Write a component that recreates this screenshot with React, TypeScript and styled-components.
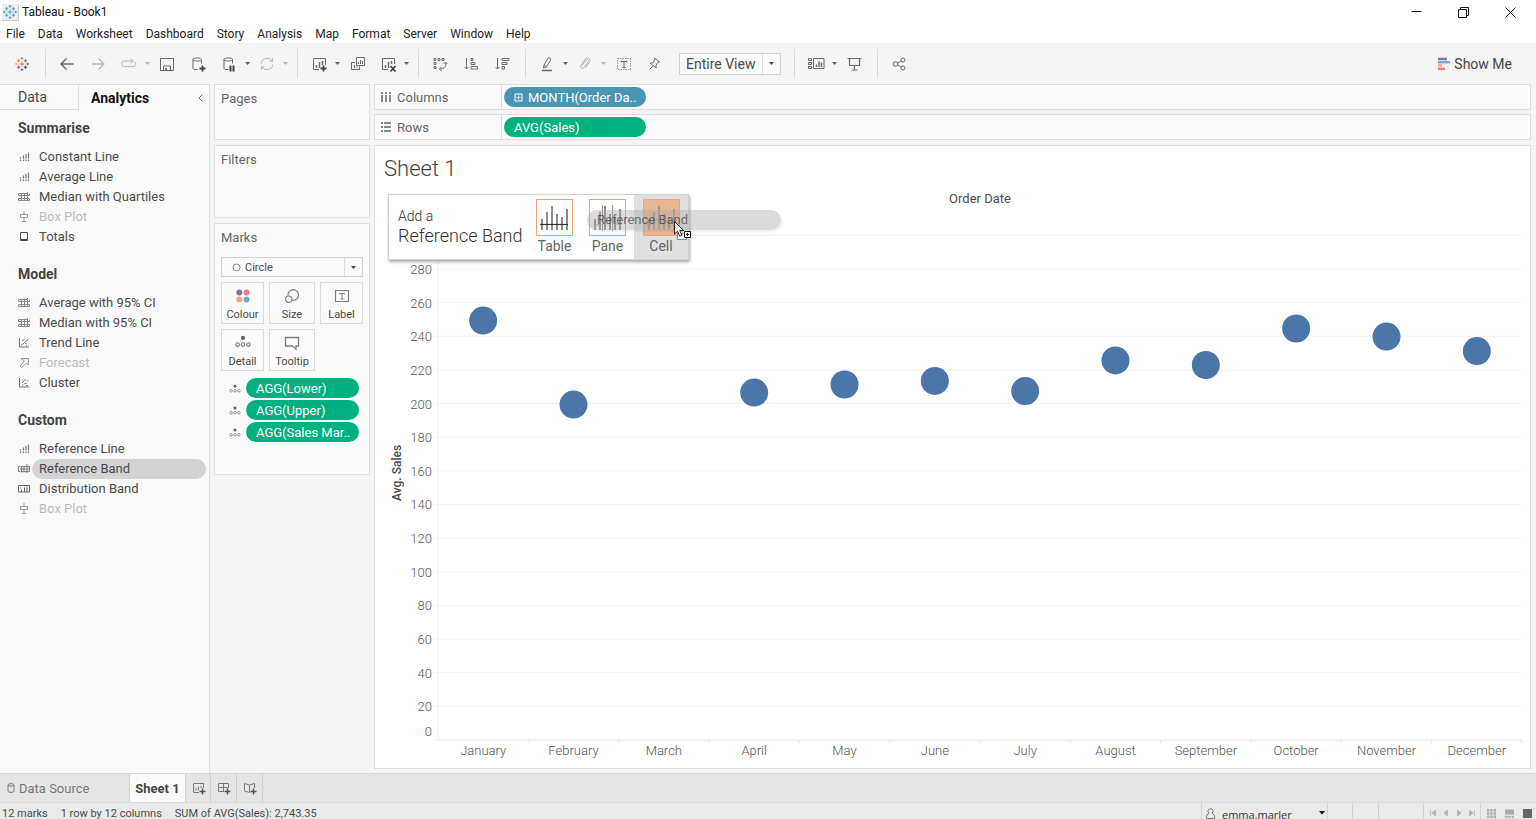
import React from "react";
import styled, { createGlobalStyle, css } from "styled-components";

const c = {
  panel: "#fafafa",
  ground: "#f4f4f4",
  line: "#dddddd",
  text: "#4a4a4a",
  soft: "#666666",
  faint: "#bbbbbb",
  green: "#00b180",
  blue: "#4996b2",
  mark: "#4a76a8",
};
const ui = `Roboto, "Liberation Sans", sans-serif`;
const system = `"Open Sans", "Noto Sans", sans-serif`;

const GlobalStyle = createGlobalStyle`
  * { box-sizing: border-box; }
  body { margin: 0; background: ${c.ground}; color: ${c.text}; font-family: ${ui}; font-size: 13px; }
  button, select { font: inherit; color: inherit; background: none; border: 0; padding: 0; margin: 0; }
  h1, h2, h3, ul, p { margin: 0; padding: 0; font-weight: inherit; font-size: inherit; }
  ul { list-style: none; }
  svg { display: block; flex: none; overflow: visible; }
`;

const Window = styled.div`
  display: flex;
  flex-direction: column;
  height: 100vh;
  min-height: 640px;
  overflow: hidden;
`;

/* ---------- title bar and menus ---------- */
const TitleBar = styled.header`
  display: flex;
  align-items: center;
  height: 24px;
  padding: 0 10px 0 2px;
  gap: 3px;
  background: #fff;
  color: #111;
  font: 12px/24px ${ui};
`;
const AppBadge = styled.span`
  display: flex;
  padding: 1px;
  background: #eee;
  border-right: 1px solid #ccc;
  border-bottom: 1px solid #ccc;
`;
const WindowControls = styled.div`
  display: flex;
  margin-left: auto;
  gap: 15px;
`;
const WindowButton = styled.button`
  display: flex;
  align-items: center;
  justify-content: center;
  width: 32px;
  height: 22px;
`;
const MenuBar = styled.nav`
  display: flex;
  height: 19px;
  padding: 0 6px;
  gap: 13px;
  background: #fff;
  color: #222;
  font: 12px/20px ${ui};
`;

/* ---------- toolbar ---------- */
const Toolbar = styled.div`
  display: flex;
  align-items: center;
  height: 41px;
  padding: 0 18px 0 6px;
  flex: none;
`;
const ToolButton = styled.button<{ $off?: boolean }>`
  display: flex;
  align-items: center;
  justify-content: center;
  width: 31px;
  height: 28px;
  color: ${(p) => (p.$off ? "#b8b8b8" : "#6c6c6c")};
`;
const CaretButton = styled.button<{ $off?: boolean }>`
  display: flex;
  align-items: center;
  justify-content: center;
  width: 7px;
  height: 28px;
  color: ${(p) => (p.$off ? "#b8b8b8" : "#606060")};
`;
const Separator = styled.span`
  width: 1px;
  height: 29px;
  margin: 0 5px 0 8px;
  background: #dadada;
`;
const SelectBox = styled.div<{ $w: number; $margin?: string }>`
  position: relative;
  display: flex;
  align-items: center;
  width: ${(p) => p.$w}px;
  margin: ${(p) => p.$margin || 0};
  border: 1px solid #d2d2d2;
  background: ${c.panel};
`;
const Select = styled.select<{ $size: number; $h: number; $pad: number }>`
  appearance: none;
  width: 100%;
  height: ${(p) => p.$h}px;
  padding-left: ${(p) => p.$pad}px;
  font-size: ${(p) => p.$size}px;
`;
const SelectCaret = styled.span`
  position: absolute;
  right: 0;
  top: 0;
  bottom: 0;
  width: 18px;
  display: flex;
  align-items: center;
  justify-content: center;
  border-left: 1px solid #e0e0e0;
  pointer-events: none;
`;
const SelectIcon = styled.span`
  position: absolute;
  left: 10px;
  pointer-events: none;
`;
const ShowMe = styled.button`
  display: flex;
  align-items: center;
  gap: 4px;
  margin-left: auto;
  padding-right: 6px;
  font-size: 14px;
  color: #444;
`;

/* ---------- workspace ---------- */
const Workspace = styled.div`
  display: flex;
  flex: 1;
  min-height: 0;
`;
const Sidebar = styled.aside`
  width: 210px;
  flex: none;
  background: ${c.panel};
  border-right: 1px solid ${c.line};
`;
const SideTabs = styled.div`
  display: flex;
  height: 26px;
  border-top: 1px solid ${c.line};
`;
const SideTab = styled.button<{ $active?: boolean }>`
  font-size: 14px;
  text-align: left;
  ${(p) =>
    p.$active
      ? css`
          padding-left: 12px;
          font-weight: 700;
          color: #111;
        `
      : css`
          width: 79px;
          padding-left: 18px;
          border-right: 1px solid ${c.line};
          border-bottom: 1px solid ${c.line};
        `}
`;
const Collapse = styled.button`
  margin-left: auto;
  padding-right: 6px;
  color: #777;
`;
const Section = styled.section`
  margin-bottom: 18px;
`;
const SectionList = styled.div`
  padding-top: 9px;
`;
const SectionTitle = styled.h2`
  padding-left: 18px;
  margin-bottom: 10px;
  font-size: 14px;
  line-height: 18px;
  font-weight: 700;
  color: #444;
`;
const SideItem = styled.button<{ $off?: boolean }>`
  display: flex;
  align-items: center;
  width: 100%;
  height: 20px;
  padding: 0 3px 0 18px;
  gap: 2px;
  text-align: left;
  color: ${(p) => (p.$off ? c.faint : c.text)};
`;
const SideLabel = styled.span<{ $active?: boolean }>`
  flex: 1;
  padding-left: 7px;
  line-height: 20px;
  border-radius: 10px;
  background: ${(p) => (p.$active ? "#d3d3d3" : "transparent")};
`;

const Cards = styled.div`
  display: flex;
  flex-direction: column;
  gap: 5px;
  width: 156px;
  margin-left: 4px;
  flex: none;
`;
const Card = styled.section<{ $h: number }>`
  height: ${(p) => p.$h}px;
  padding: 5px 6px;
  background: ${c.panel};
  border: 1px solid ${c.line};
`;
const CardTitle = styled.h2`
  font-size: 13px;
  line-height: 18px;
  color: ${c.soft};
`;
const MarkButtons = styled.div`
  display: grid;
  grid-template-columns: 43px 46px 43px;
  gap: 5px;
  padding-top: 5px;
  margin-bottom: 7px;
`;
const MarkButton = styled.button`
  display: flex;
  flex-direction: column;
  align-items: center;
  justify-content: space-between;
  height: 42px;
  padding: 5px 0 1px;
  border: 1px solid ${c.line};
  font-size: 11px;
  line-height: 14px;

  svg {
    color: #808080;
  }
`;
const PillRow = styled.div`
  display: flex;
  align-items: center;
  height: 20px;
  margin-bottom: 2px;
  padding: 0 4px 0 8px;
  gap: 5px;
`;
const Pill = styled.button<{ $color: string; $w?: number }>`
  display: flex;
  align-items: center;
  gap: 5px;
  height: 20px;
  padding-left: 10px;
  ${(p) => (p.$w ? `width: ${p.$w}px;` : "flex: 1;")}
  border-radius: 10px;
  background: ${(p) => p.$color};
  color: #fff;
  font-size: 13px;
  white-space: nowrap;
`;

const Main = styled.main`
  display: flex;
  flex-direction: column;
  flex: 1;
  min-width: 0;
  padding: 0 5px 4px 4px;
`;
const Shelf = styled.div`
  display: flex;
  align-items: center;
  height: 26px;
  margin-bottom: 4px;
  flex: none;
  background: ${c.panel};
  border: 1px solid ${c.line};
`;
const ShelfLabel = styled.div`
  display: flex;
  align-items: center;
  gap: 6px;
  width: 127px;
  height: 24px;
  padding-left: 6px;
  margin-right: 2px;
  border-right: 1px solid ${c.line};
  color: ${c.soft};
`;
const Sheet = styled.section`
  position: relative;
  display: flex;
  flex-direction: column;
  flex: 1;
  min-height: 0;
  margin-top: 1px;
  padding-right: 8px;
  background: #fff;
  border: 1px solid ${c.line};
`;
const SheetTitle = styled.h1`
  padding-left: 9px;
  font-size: 22px;
  line-height: 46px;
  font-weight: 300;
  color: #444;
`;
const ColumnTitle = styled.p`
  padding-left: 63px;
  text-align: center;
  font-size: 13px;
  line-height: 14px;
`;
const Chart = styled.div`
  display: flex;
  flex: 1;
  min-height: 0;
`;
const RowTitle = styled.p`
  flex: none;
  width: 32px;
  padding-right: 12px;
  writing-mode: vertical-rl;
  transform: rotate(180deg);
  text-align: center;
  font-size: 12px;
  line-height: 20px;
  font-weight: 500;
`;
const AxisSvg = styled.svg`
  width: 31px;
  height: 100%;
  font-size: 13px;
  font-weight: 300;
  fill: #555;
`;
const PlotSvg = styled.svg`
  flex: 1;
  min-width: 0;
  height: 100%;
`;
const Months = styled.div`
  display: grid;
  grid-template-columns: repeat(12, 1fr);
  padding-left: 63px;
  height: 28px;
  text-align: center;
  font-size: 13px;
  line-height: 21px;
  font-weight: 300;
  color: #555;
`;

/* ---------- drop target and dragged item ---------- */
const DropCard = styled.div`
  position: absolute;
  left: 13px;
  top: 48px;
  display: flex;
  height: 66px;
  padding-left: 9px;
  background: #fff;
  border: 1px solid #d0d0d0;
  box-shadow: 1px 2px 3px rgba(0, 0, 0, 0.35);
`;
const DropText = styled.p`
  width: 130px;
  padding-top: 12px;
  font-size: 14px;
  line-height: 18px;
  font-weight: 300;
  color: #333;
`;
const DropName = styled.span`
  display: block;
  font-size: 18px;
  line-height: 22px;
`;
const DropTarget = styled.button<{ $active?: boolean }>`
  display: flex;
  flex-direction: column;
  align-items: center;
  width: ${(p) => (p.$active ? 54 : 53)}px;
  padding-top: 4px;
  font-size: 14px;
  line-height: 20px;
  color: #666;
  background: ${(p) => (p.$active ? "#e0e0e0" : "#fff")};
`;
const DropIcon = styled.span<{ $active?: boolean }>`
  display: flex;
  width: 37px;
  height: 37px;
  border: 1px solid #f2a373;
  background: ${(p) => (p.$active ? "#e8b592" : "#fff")};
`;
const Ghost = styled.div`
  position: absolute;
  left: 212px;
  top: 64px;
  width: 194px;
  height: 20px;
  padding-left: 10px;
  border-radius: 10px;
  background: rgba(170, 170, 170, 0.42);
  box-shadow: 2px 2px 1px rgba(0, 0, 0, 0.06);
  color: rgba(60, 60, 60, 0.7);
  font-size: 13px;
  line-height: 20px;
`;
const Cursor = styled.span`
  position: absolute;
  left: 87px;
  top: 11px;
`;

/* ---------- bottom bars ---------- */
const SheetTabs = styled.div`
  display: flex;
  height: 30px;
  flex: none;
  background: #e5e5e5;
  border-top: 1px solid #d8d8d8;
  border-bottom: 1px solid #d8d8d8;
`;
const SheetTab = styled.button<{ $w: number; $active?: boolean }>`
  display: flex;
  align-items: center;
  width: ${(p) => p.$w}px;
  gap: 4px;
  border-right: 1px solid #d0d0d0;
  color: #7a7a7a;
  ${(p) =>
    p.$active
      ? css`
          justify-content: center;
          background: ${c.panel};
          color: #444;
          font-weight: 700;
        `
      : css`
          padding-left: 7px;
        `}
`;
const StatusBar = styled.footer`
  display: flex;
  height: 16px;
  flex: none;
  gap: 13px;
  padding-left: 2px;
  background: #eaeaea;
  font-size: 11px;
  line-height: 21px;
`;
const StatusRight = styled.div`
  display: flex;
  margin-left: auto;
`;
const StatusCell = styled.div<{ $w: number; $gap?: number; $pad?: number }>`
  display: flex;
  align-items: center;
  width: ${(p) => p.$w}px;
  height: 20px;
  gap: ${(p) => p.$gap || 0}px;
  padding-left: ${(p) => p.$pad || 0}px;
  border-left: 1px solid #d0d0d0;
`;
const UserSelect = styled.select`
  appearance: none;
  width: 90px;
  height: 18px;
  font-size: 11px;
  font-family: ${system};
  color: #333;
`;
const IconButton = styled.button`
  display: flex;
`;

/* ---------- icons ---------- */
type IconProps = { children: React.ReactNode; w?: number; h?: number };
const Icon = ({ children, w = 16, h = 16 }: IconProps) => (
  <svg width={w} height={h} viewBox={`0 0 ${w} ${h}`} fill="none" stroke="currentColor" strokeWidth="1" aria-hidden="true">
    {children}
  </svg>
);
const Caret = () => (
  <Icon w={5} h={3}>
    <path d="M0 0h5L2.500 3z" fill="currentColor" stroke="none" />
  </Icon>
);
const Logo = ({ mono }: { mono?: boolean }) => {
  const crosses: [number, number, number, string][] = [
    [7, 7, 2.4, "#e8762b"],
    [3.6, 3.8, 1.7, "#eb9129"],
    [10.4, 3.8, 1.7, "#59879b"],
    [3.6, 10.2, 1.7, "#c8364a"],
    [10.4, 10.2, 1.7, "#1f457e"],
    [7, 1.4, 1.3, "#7099a6"],
    [7, 12.6, 1.3, "#5b6591"],
    [1.3, 7, 1.3, "#eb9fa0"],
    [12.7, 7, 1.3, "#5b6591"],
  ];
  return (
    <Icon w={14} h={14}>
      {crosses.map(([x, y, r, color], i) => (
        <path key={i} d={`M${x - r} ${y}h${2 * r}M${x} ${y - r}v${2 * r}`} stroke={mono ? "#4f9cc9" : color} strokeWidth="1" />
      ))}
    </Icon>
  );
};
const plus = <path d="M12.500 9.500v6M9.500 12.500h6" strokeWidth="1.800" stroke="#444" />;
const cylinder = <path d="M7.500 13.500H5c-1.500 0-2-.6-2-1.300V3.500M11.500 7.500v-4M3 3.500C3 2.600 4.500 2 7.250 2s4.250.6 4.250 1.500S10 5 7.250 5 3 4.400 3 3.500z" />;
const icons: Record<string, React.ReactNode> = {
  back: <path d="M14.500 8H2.500M7.500 2.500L2 8l5.500 5.500" strokeWidth="1.500" />,
  forward: <path d="M2 8h12M8.500 2.500L14 8l-5.500 5.500" strokeWidth="1.300" />,
  replay: <path d="M3.500 5H12M9.500 2.500L12 5 9.500 7.500M3.500 5a2.800 2.800 0 0 0 0 5.600h8.500a2.800 2.800 0 0 0 2-4.800" />,
  save: (
    <>
      <path d="M1.500 2.500h13v12h-13z" />
      <path d="M4.500 14v-4h7v4" />
      <path d="M6 12h2v2H6z" fill="currentColor" stroke="none" />
    </>
  ),
  addData: <>{cylinder}{plus}</>,
  pauseData: <>{cylinder}<path d="M9.500 9.500v6M12.500 9.500v6" strokeWidth="2" stroke="#444" /></>,
  refresh: <path d="M2 7.500A6 6 0 0 1 13 5M14 8.500A6 6 0 0 1 3 11M13.500 2v3.200h-3M2.500 14v-3.200h3" />,
  newSheet: (
    <>
      <path d="M8 13.500H2.500v-11h12V9" />
      <path d="M5.500 9v3M8.500 6v6M11.500 5v4" strokeWidth="1.500" />
      {plus}
    </>
  ),
  duplicate: (
    <>
      <path d="M7.500 1.500h8v8h-8z" />
      <path d="M9.500 6v2M11.500 4v4M13.500 5v3M6 6.500H2.500v7h8v-3M5.500 9v3M8 10.500v1.500" />
    </>
  ),
  clearSheet: (
    <>
      <path d="M8 13.500H2.500v-11h12V8" />
      <path d="M5.500 9v3M8.500 6v6M11.500 5v3" strokeWidth="1.500" />
      <path d="M10.500 10l5 5.500M15.500 10l-5 5.500" stroke="#444" strokeWidth="1.800" />
    </>
  ),
  swap: <path d="M2 2.500h2v2H2zM6 2.500h2v2H6zM10 2.500h2v2h-2zM2 6.500h2v2H2zM2 10.500h2v2H2zM13.500 6.500c1.500 4-1 6.500-6 6.500M11.500 8l2-2 2 2M9.500 11l-2 2 2 2" />,
  sortUp: <path d="M3.500 2v11M1.500 11L3.500 13l2-2M8 2.500h2v2H8zM8 6.500h4v2H8zM8 10.500h6.500v2.500H8z" />,
  sortDown: <path d="M3.500 2v11M1.500 11L3.500 13l2-2M8 2.500h7v2H8zM8 6.500h5v2H8zM8 10.500h2.500v2.500H8z" />,
  highlight: <><path d="M4.500 12l.5-3L9.500 1.500l2.500 1.700L7.500 10.800z M5 9l2.500 1.800" /><path d="M3 14.500h10" strokeWidth="1.500" /></>,
  clip: <path d="M5 9.500l4-5.500c1-1.500 3.200 0 2.200 1.500L7 11.500c-1.500 2-4.500 0-3-2.200l4.500-6.500c2-2.600 6 .2 4.200 3l-4.200 6" />,
  textLabel: (
    <>
      <path d="M2.500 2.500h13v11h-13z" strokeDasharray="1.500 1" stroke="#999" />
      <path d="M6 6.500v-1h6v1M9 5.500v6M7.500 11.500h3" />
    </>
  ),
  pin: <path d="M8.500 2l5 4-1.500.3-2 3 .2 2.700-6-4.700 2.600-.5 2-3zM7 10L3.500 13.500" />,
  cards: (
    <>
      <path d="M.5 2.500h3v2h-3zM.5 6.500h3v2h-3zM.5 10.500h3v2h-3zM5.500 2.500h10.500v10H5.500z" />
      <path d="M8.500 8.500v2.500M11 5.500V11M13.500 6.500V11" strokeWidth="1.500" />
    </>
  ),
  present: <path d="M1.500 2.500h14M3.500 2.500v7h10v-7M8.500 9.500V14M5.500 14h6" strokeWidth="1.200" />,
  share: (
    <>
      <circle cx="4.500" cy="8" r="2.300" />
      <circle cx="12" cy="4" r="2" />
      <circle cx="12" cy="12" r="2" />
      <path d="M6.500 7l3.700-2M6.500 9l3.700 2" />
    </>
  ),
};
const ToolIcon = ({ name }: { name: string }) => <Icon>{icons[name]}</Icon>;

const sideIcons: Record<string, React.ReactNode> = {
  line: <path d="M2.500 6v1.500M2.500 8.500v1.500M5.500 4.500v3M5.500 8.500v1.500M8 3v4.500M8 8.500v1.500M10.500 1.500v6M10.500 8.500v1.500" strokeWidth="1.200" stroke="#777" />,
  quartile: <path d="M.5 2.500h9M.5 2.500v2h11v-2M.5 9.500v-2h11v2zM3.500 2.500v7M6.500 2.500v7M9.500 1v8.500" stroke="#888" />,
  box: <path d="M6 0v3M2.500 3.500h7v3h-7zM6 7v3M4 10.500h4" stroke="#999" />,
  totals: <path d="M2.500 1.500h7v8h-7zM2.500 8.500h7" />,
  trend: <path d="M1.500 1v9H11M3 8.500L10.500 2M4 3.500h1.500M7 6.500h1.500M8 8.500h1M6 2v1" stroke="#777" />,
  forecast: <path d="M3 1.500h7.500V8L8.500 6l-5 4.500L2 9l4.500-5z" stroke="#999" />,
  cluster: <path d="M1.500 1v9H11M4 3h1M4 6l2-2M7 2v2M6.500 6.500h2M9 4l1.500-1M4 8h1.500M8 8.500h2" stroke="#777" />,
  band: <path d="M2.500 3.500h-2v5h2M3.500 3v6.500M6 3v6.500M9 1v9M4 3.500h7.500v5H4M2 6h9" stroke="#777" />,
  distribution: <path d="M.5 2.500h11V9H.5zM3.500 6.500V9M6.500 4.500V9M9 3.500V9M2 5h1" stroke="#666" />,
};
const SideIcon = ({ name }: { name: string }) => <Icon w={12} h={12}>{sideIcons[name]}</Icon>;

const DetailDots = ({ small }: { small?: boolean }) => (
  <svg width={small ? 12 : 16} height={small ? 9 : 13} viewBox="0 0 18 14" fill="none" stroke="#777" strokeWidth="1.200" aria-hidden="true">
    <circle cx="9" cy="3" r="2.400" fill="#666" stroke="none" />
    <circle cx="3" cy="10.500" r="2" />
    <circle cx="9" cy="10.500" r="2" />
    <circle cx="15" cy="10.500" r="2" />
  </svg>
);
const ScopeBars = ({ kind }: { kind: "table" | "pane" | "cell" }) => (
  <Icon w={35} h={35}>
    <g stroke={kind === "cell" ? "#a3958c" : "#8e8a8a"} strokeWidth="2">
      {[19, 12, 6, 14, 17, 9].map((y, i) => (
        <path key={i} d={`M${5 + i * 5} ${y}V30`} />
      ))}
    </g>
    {kind === "table" && <path d="M3 24.500h28" stroke="#333" strokeWidth="1.200" />}
    {kind === "pane" && <path d="M12.500 5v26M22.500 5v26M3.500 25h8M14 21h8M24 24h8" stroke="#999" />}
    {kind === "cell" && <path d="M3 25h4M8 22h4M13 20h4M18 24h4M23 26h4M28 21h4" stroke="#888" />}
  </Icon>
);

/* ---------- data ---------- */
const menus = ["File", "Data", "Worksheet", "Dashboard", "Story", "Analysis", "Map", "Format", "Server", "Window", "Help"];
type Tool = { icon: string; label: string; caret?: boolean; off?: boolean };
const toolGroups: Tool[][] = [
  [
    { icon: "back", label: "Undo" },
    { icon: "forward", label: "Redo", off: true },
    { icon: "replay", label: "Replay", caret: true, off: true },
    { icon: "save", label: "Save" },
    { icon: "addData", label: "New data source" },
    { icon: "pauseData", label: "Pause updates", caret: true },
    { icon: "refresh", label: "Run update", caret: true, off: true },
  ],
  [
    { icon: "newSheet", label: "New worksheet", caret: true },
    { icon: "duplicate", label: "Duplicate" },
    { icon: "clearSheet", label: "Clear sheet", caret: true },
  ],
  [
    { icon: "swap", label: "Swap rows and columns" },
    { icon: "sortUp", label: "Sort ascending" },
    { icon: "sortDown", label: "Sort descending" },
  ],
  [
    { icon: "highlight", label: "Highlight", caret: true },
    { icon: "clip", label: "Group members", caret: true, off: true },
    { icon: "textLabel", label: "Show mark labels" },
    { icon: "pin", label: "Fix axes" },
  ],
];
const viewTools: Tool[] = [
  { icon: "cards", label: "Show or hide cards", caret: true },
  { icon: "present", label: "Presentation mode" },
];
type Entry = { icon: string; label: string; off?: boolean; active?: boolean };
const sections: { title: string; entries: Entry[] }[] = [
  {
    title: "Summarise",
    entries: [
      { icon: "line", label: "Constant Line" },
      { icon: "line", label: "Average Line" },
      { icon: "quartile", label: "Median with Quartiles" },
      { icon: "box", label: "Box Plot", off: true },
      { icon: "totals", label: "Totals" },
    ],
  },
  {
    title: "Model",
    entries: [
      { icon: "quartile", label: "Average with 95% CI" },
      { icon: "quartile", label: "Median with 95% CI" },
      { icon: "trend", label: "Trend Line" },
      { icon: "forecast", label: "Forecast", off: true },
      { icon: "cluster", label: "Cluster" },
    ],
  },
  {
    title: "Custom",
    entries: [
      { icon: "line", label: "Reference Line" },
      { icon: "band", label: "Reference Band", active: true },
      { icon: "distribution", label: "Distribution Band" },
      { icon: "box", label: "Box Plot", off: true },
    ],
  },
];
const sales: [string, number | null][] = [
  ["January", 249.3],
  ["February", 199.4],
  ["March", null],
  ["April", 206.5],
  ["May", 211.3],
  ["June", 213.4],
  ["July", 207.4],
  ["August", 225.6],
  ["September", 222.9],
  ["October", 244.6],
  ["November", 239.8],
  ["December", 231.2],
];
const AXIS_MAX = 317.4;
const ticks = Array.from({ length: 16 }, (_, i) => i * 20);
const toY = (v: number) => `${(1 - v / AXIS_MAX) * 100}%`;
const toX = (n: number) => `${(n / 12) * 100}%`;

const Tools = ({ items }: { items: Tool[] }) => (
  <>
    {items.map((t) => (
      <React.Fragment key={t.icon}>
        <ToolButton aria-label={t.label} $off={t.off}>
          <ToolIcon name={t.icon} />
        </ToolButton>
        {t.caret && (
          <CaretButton aria-label={`${t.label} options`} $off={t.off}>
            <Caret />
          </CaretButton>
        )}
      </React.Fragment>
    ))}
  </>
);

const SalesChart = () => (
  <>
    <Chart>
      <RowTitle>Avg. Sales</RowTitle>
      <AxisSvg>
        {ticks.slice(0, 15).map((t) => (
          <text key={t} x="25" y={toY(t)} dy={t === 0 ? -4 : 5} textAnchor="end">
            {t}
          </text>
        ))}
      </AxisSvg>
      <PlotSvg role="img" aria-label="Average sales by month">
        {ticks.map((t) => (
          <line key={t} x1="-4" x2="100%" y1={toY(t)} y2={toY(t)} stroke="#f3f3f3" />
        ))}
        <line x1="0" x2="0" y1="0" y2="100%" stroke="#f0f0f0" />
        <line x1="0" x2="100%" y1="100%" y2="100%" stroke="#ececec" />
        {sales.map(([month], i) => (
          <svg key={month} x={toX(i + 1)} y="100%">
            <path d="M0 0v3" stroke="#e8e8e8" />
          </svg>
        ))}
        {sales.map(([month, v], i) => v !== null && <circle key={month} cx={toX(i + 0.5)} cy={toY(v)} r="14" fill={c.mark} />)}
      </PlotSvg>
    </Chart>
    <Months>
      {sales.map(([month]) => (
        <span key={month}>{month}</span>
      ))}
    </Months>
  </>
);

export default function App() {
  return (
    <Window>
      <GlobalStyle />
      <TitleBar>
        <AppBadge>
          <Logo mono />
        </AppBadge>
        Tableau - Book1
        <WindowControls>
          <WindowButton aria-label="Minimise">
            <Icon w={11} h={11}><path d="M.5 4.500h10" /></Icon>
          </WindowButton>
          <WindowButton aria-label="Restore">
            <Icon w={11} h={11}><path d="M.5 2.500h8v8h-8zM2.500 2.500v-2h8v8h-2" stroke="#111" /></Icon>
          </WindowButton>
          <WindowButton aria-label="Close">
            <Icon w={11} h={11}><path d="M.5.500l10 10M10.500.500l-10 10" stroke="#111" /></Icon>
          </WindowButton>
        </WindowControls>
      </TitleBar>
      <MenuBar>
        {menus.map((m) => (
          <button key={m}>{m}</button>
        ))}
      </MenuBar>

      <Toolbar>
        <ToolButton aria-label="Start page">
          <Logo />
        </ToolButton>
        {toolGroups.map((group, i) => (
          <React.Fragment key={i}>
            <Separator />
            <Tools items={group} />
          </React.Fragment>
        ))}
        <SelectBox $w={102} $margin="0 5px 0 10px">
          <Select $size={14} $h={20} $pad={6} aria-label="Fit">
            <option>Entire View</option>
          </Select>
          <SelectCaret>
            <Caret />
          </SelectCaret>
        </SelectBox>
        <Separator />
        <Tools items={viewTools} />
        <Separator />
        <ToolButton aria-label="Share">
          <ToolIcon name="share" />
        </ToolButton>
        <ShowMe>
          <Icon w={12} h={14}>
            <path d="M0 2h9" stroke="#8c7399" strokeWidth="2.500" />
            <path d="M0 5.200h12" stroke="#7fa3cc" strokeWidth="2.500" />
            <path d="M0 8.500h4" stroke="#f5a97c" strokeWidth="2.500" />
            <path d="M0 11.800h7" stroke="#f5768a" strokeWidth="2.500" />
          </Icon>
          Show Me
        </ShowMe>
      </Toolbar>

      <Workspace>
        <Sidebar>
          <SideTabs>
            <SideTab>Data</SideTab>
            <SideTab $active>Analytics</SideTab>
            <Collapse aria-label="Collapse pane">
              <Icon w={5} h={8}><path d="M4.500.5L1 4l3.500 3.500" /></Icon>
            </Collapse>
          </SideTabs>
          <SectionList>
            {sections.map((s) => (
              <Section key={s.title}>
                <SectionTitle>{s.title}</SectionTitle>
                {s.entries.map((e) => (
                  <SideItem key={e.label} $off={e.off}>
                    <SideIcon name={e.icon} />
                    <SideLabel $active={e.active}>{e.label}</SideLabel>
                  </SideItem>
                ))}
              </Section>
            ))}
          </SectionList>
        </Sidebar>

        <Cards>
          <Card $h={56}>
            <CardTitle>Pages</CardTitle>
          </Card>
          <Card $h={73}>
            <CardTitle>Filters</CardTitle>
          </Card>
          <Card $h={252}>
            <CardTitle>Marks</CardTitle>
            <SelectBox $w={142} $margin="10px 0 0">
              <SelectIcon>
                <Icon w={9} h={9}><circle cx="4.500" cy="4.500" r="3.500" stroke="#888" /></Icon>
              </SelectIcon>
              <Select $size={11} $h={18} $pad={23} aria-label="Mark type">
                <option>Circle</option>
              </Select>
              <SelectCaret>
                <Caret />
              </SelectCaret>
            </SelectBox>
            <MarkButtons>
              <MarkButton>
                <Icon w={14} h={16}>
                  <g stroke="none">
                    <circle cx="3.300" cy="4.500" r="3" fill="#85719b" />
                    <circle cx="10.500" cy="4.500" r="3" fill="#f5768a" />
                    <circle cx="3.300" cy="11.500" r="3" fill="#f5a97c" />
                    <circle cx="10.500" cy="11.500" r="3" fill="#7fa3cc" />
                  </g>
                </Icon>
                Colour
              </MarkButton>
              <MarkButton>
                <Icon>
                  <path d="M4 7.500A5.300 5.300 0 1 1 8.300 12.200" strokeWidth="1.200" />
                  <circle cx="4.800" cy="11.200" r="3.200" strokeWidth="1.200" />
                </Icon>
                Size
              </MarkButton>
              <MarkButton>
                <Icon>
                  <path d="M1.500 2.500h13v11h-13z" strokeWidth="1.200" />
                  <path d="M5.500 6.500v-1h5v1M8 5.500v5.500M6.500 11h3" />
                </Icon>
                Label
              </MarkButton>
              <MarkButton>
                <DetailDots />
                Detail
              </MarkButton>
              <MarkButton>
                <Icon>
                  <path d="M1.500 2.500h13v8.500H12v3L8.500 11h-7z" strokeWidth="1.300" />
                </Icon>
                Tooltip
              </MarkButton>
            </MarkButtons>
            {["AGG(Lower)", "AGG(Upper)", "AGG(Sales Mar.."].map((label) => (
              <PillRow key={label}>
                <DetailDots small />
                <Pill $color={c.green}>{label}</Pill>
              </PillRow>
            ))}
          </Card>
        </Cards>

        <Main>
          <Shelf>
            <ShelfLabel>
              <Icon w={10} h={10}>
                <path d="M1 0v2M1 3v7M5 0v2M5 3v7M9 0v2M9 3v7" strokeWidth="1.500" />
              </Icon>
              Columns
            </ShelfLabel>
            <Pill $color={c.blue} $w={142}>
              <Icon w={9} h={9}><path d="M1 1h7v7H1zM4.500 2.500v4M2.500 4.500h4" /></Icon>
              MONTH(Order Da..
            </Pill>
          </Shelf>
          <Shelf>
            <ShelfLabel>
              <Icon w={10} h={10}>
                <path d="M0 1h2M3 1h7M0 5h2M3 5h7M0 9h2M3 9h7" strokeWidth="1.500" />
              </Icon>
              Rows
            </ShelfLabel>
            <Pill $color={c.green} $w={142}>AVG(Sales)</Pill>
          </Shelf>
          <Sheet>
            <SheetTitle>Sheet 1</SheetTitle>
            <ColumnTitle>Order Date</ColumnTitle>
            <SalesChart />
            <DropCard>
              <DropText>
                Add a<DropName>Reference Band</DropName>
              </DropText>
              <DropTarget>
                <DropIcon><ScopeBars kind="table" /></DropIcon>
                Table
              </DropTarget>
              <DropTarget>
                <DropIcon><ScopeBars kind="pane" /></DropIcon>
                Pane
              </DropTarget>
              <DropTarget $active>
                <DropIcon $active><ScopeBars kind="cell" /></DropIcon>
                Cell
              </DropTarget>
            </DropCard>
            <Ghost>
              Reference Band
              <Cursor>
                <Icon w={18} h={20}>
                  <path d="M3.500 12.500h9v6h-9z" stroke="#222" strokeDasharray="1 1" fill="#fff" />
                  <path d="M.5.500v12.500l3-2.800 2.200 5 2.200-1-2.200-4.700h4z" fill="#fff" stroke="#222" />
                  <path d="M10.500 10.500h6v6h-6zM13.500 12v3M12 13.500h3" fill="#fff" stroke="#111" />
                </Icon>
              </Cursor>
            </Ghost>
          </Sheet>
        </Main>
      </Workspace>

      <SheetTabs>
        <SheetTab $w={130}>
          <Icon w={8} h={10}>
            <path d="M1 2v6c0 1.800 6 1.800 6 0V2C7 .3 1 .3 1 2c0 1.500 6 1.500 6 0" />
          </Icon>
          Data Source
        </SheetTab>
        <SheetTab $w={56} $active>Sheet 1</SheetTab>
        <SheetTab $w={25} aria-label="New worksheet">
          <Icon w={12} h={12}>
            <path d="M6 10.500H.500v-9h10V6M3 6v2.500M5.500 4.500v4M8 4v2" />
            <path d="M9.500 6.500v6M6.500 9.500h6" stroke="#555" strokeWidth="1.500" />
          </Icon>
        </SheetTab>
        <SheetTab $w={26} aria-label="New dashboard">
          <Icon w={12} h={12}>
            <path d="M6 9.500H.500v-8h10V6M5.500 1.500v8M.500 5.500h10" />
            <path d="M9.500 6.500v6M6.500 9.500h6" stroke="#555" strokeWidth="1.500" />
          </Icon>
        </SheetTab>
        <SheetTab $w={26} aria-label="New story">
          <Icon w={12} h={12}>
            <path d="M5.500 10.500L.500 9V1.500l5 1.500 5-1.500V6M5.500 3v7.500" />
            <path d="M9.500 6.500v6M6.500 9.500h6" stroke="#555" strokeWidth="1.500" />
          </Icon>
        </SheetTab>
      </SheetTabs>
      <StatusBar>
        <span>12 marks</span>
        <span>1 row by 12 columns</span>
        <span>SUM of AVG(Sales): 2,743.35</span>
        <StatusRight>
          <StatusCell $w={126} $pad={4} $gap={7}>
            <Icon w={9} h={11}>
              <path d="M4.500.800a2.300 2.300 0 0 1 1.500 4.200c-.3 1 2.200.8 2.500 3v2.500h-8V8c.3-2.200 2.800-2 2.500-3A2.300 2.300 0 0 1 4.500.800z" stroke="#777" />
            </Icon>
            <UserSelect aria-label="Signed-in user">
              <option>emma.marler</option>
            </UserSelect>
            <Icon w={6} h={4}><path d="M0 0h6L3 3.500z" fill="#111" stroke="none" /></Icon>
          </StatusCell>
          <StatusCell $w={25} />
          <StatusCell $w={26} />
          <StatusCell $w={45} />
          <StatusCell $w={57} $pad={6} $gap={7}>
            {["M.5 0v6M5.500 0v6L2 3z", "M4.500 0v6L1 3z", "M1.500 0v6L5 3z", "M.500 0v6L4 3zM5.500 0v6"].map((d) => (
              <IconButton key={d} aria-label="Change sheet">
                <Icon w={6} h={6}><path d={d} stroke="#b5b5b5" fill="#b5b5b5" strokeWidth=".8" /></Icon>
              </IconButton>
            ))}
          </StatusCell>
          <StatusCell $w={56} $pad={6} $gap={9}>
            <IconButton aria-label="Sheet sorter">
              <Icon w={9} h={9}><path d="M0 1.300h9M0 4.500h9M0 7.700h9" stroke="#aaa" strokeWidth="2.400" strokeDasharray="2.400 .9" /></Icon>
            </IconButton>
            <IconButton aria-label="Filmstrip">
              <Icon w={9} h={9}><path d="M0 3h9" stroke="#aaa" strokeWidth="5" /><path d="M0 7.700h9" stroke="#aaa" strokeWidth="2" strokeDasharray="2.400 .9" /></Icon>
            </IconButton>
            <IconButton aria-label="Tabs">
              <Icon w={9} h={9}><path d="M0 0h9v9H0z" fill="#666" stroke="none" /></Icon>
            </IconButton>
          </StatusCell>
        </StatusRight>
      </StatusBar>
    </Window>
  );
}
